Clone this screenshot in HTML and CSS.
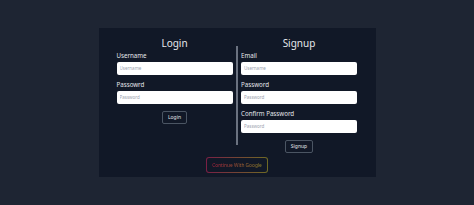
FILE: index.html
```html
<!DOCTYPE html>
<html>
<head>
<meta charset="utf-8">
<link rel="stylesheet" href="styles.css">
</head>
<body>
<div class="page">
  <div class="card">
    <div class="row">
      <div class="col">
        <h2 class="title">Login</h2>
        <div class="field">
          <label class="label">Username</label>
          <input class="input" type="text" placeholder="Username">
        </div>
        <div class="field">
          <label class="label">Passowrd</label>
          <input class="input" type="password" placeholder="Password">
        </div>
        <button class="btn">Login</button>
      </div>
      <div class="divider"></div>
      <div class="col">
        <h2 class="title">Signup</h2>
        <div class="field">
          <label class="label">Email</label>
          <input class="input" type="text" placeholder="Username">
        </div>
        <div class="field">
          <label class="label">Password</label>
          <input class="input" type="password" placeholder="Password">
        </div>
        <div class="field">
          <label class="label">Confirm Password</label>
          <input class="input" type="password" placeholder="Password">
        </div>
        <button class="btn">Signup</button>
      </div>
    </div>
    <button class="google"><span class="google-text">Continue With Google</span></button>
  </div>
</div>
</body>
</html>
```
FILE: styles.css
```css
* { box-sizing: border-box; }
html, body {
  margin: 0;
  padding: 0;
  height: 100%;
}
body {
  background: #1e2533;
  font-family: "Noto Sans", "DejaVu Sans", sans-serif;
  color: #e5e7eb;
}
.page {
  height: 100%;
  display: flex;
  align-items: center;
  justify-content: center;
}
.card {
  width: 277px;
  background: #111827;
  padding: 8px 18px 4px;
  display: flex;
  flex-direction: column;
  align-items: center;
}
.row {
  display: flex;
  width: 100%;
  align-items: flex-start;
}
.col {
  width: 116px;
  display: flex;
  flex-direction: column;
  align-items: stretch;
}
.divider {
  width: 1.5px;
  height: 99px;
  margin: 10px 3.5px 0 3.5px;
  background: #6b7280;
  flex: none;
}
.title {
  margin: 0;
  font-size: 10px;
  line-height: 15px;
  font-weight: 400;
  text-align: center;
  color: #e5e7eb;
}
.field {
  display: flex;
  flex-direction: column;
  margin-bottom: 5px;
}
.label {
  font-size: 6.2px;
  line-height: 10px;
  color: #e5e7eb;
  margin-bottom: 1px;
}
.input {
  height: 13px;
  border: none;
  border-radius: 2px;
  background: #ffffff;
  padding: 0 3px;
  font-family: inherit;
  font-size: 4.5px;
  color: #111827;
  outline: none;
}
.input::placeholder {
  color: #9ca3af;
}
.btn {
  align-self: center;
  margin-top: 2px;
  height: 13.5px;
  padding: 0 5px;
  background: transparent;
  border: 1px solid #4b5563;
  border-radius: 2px;
  color: #e5e7eb;
  font-family: inherit;
  font-size: 5px;
  line-height: 1;
}
.google {
  margin-top: 4px;
  width: 62px;
  height: 16px;
  padding: 0;
  border: 1px solid transparent;
  border-radius: 3px;
  background:
    linear-gradient(#111827, #111827) padding-box,
    linear-gradient(90deg, #7a1f45, #6f6a24) border-box;
  font-family: inherit;
  font-size: 4.8px;
  line-height: 1;
}
.google-text {
  background: linear-gradient(90deg, #b4213f, #9a8a2a);
  -webkit-background-clip: text;
  background-clip: text;
  color: transparent;
}
```
